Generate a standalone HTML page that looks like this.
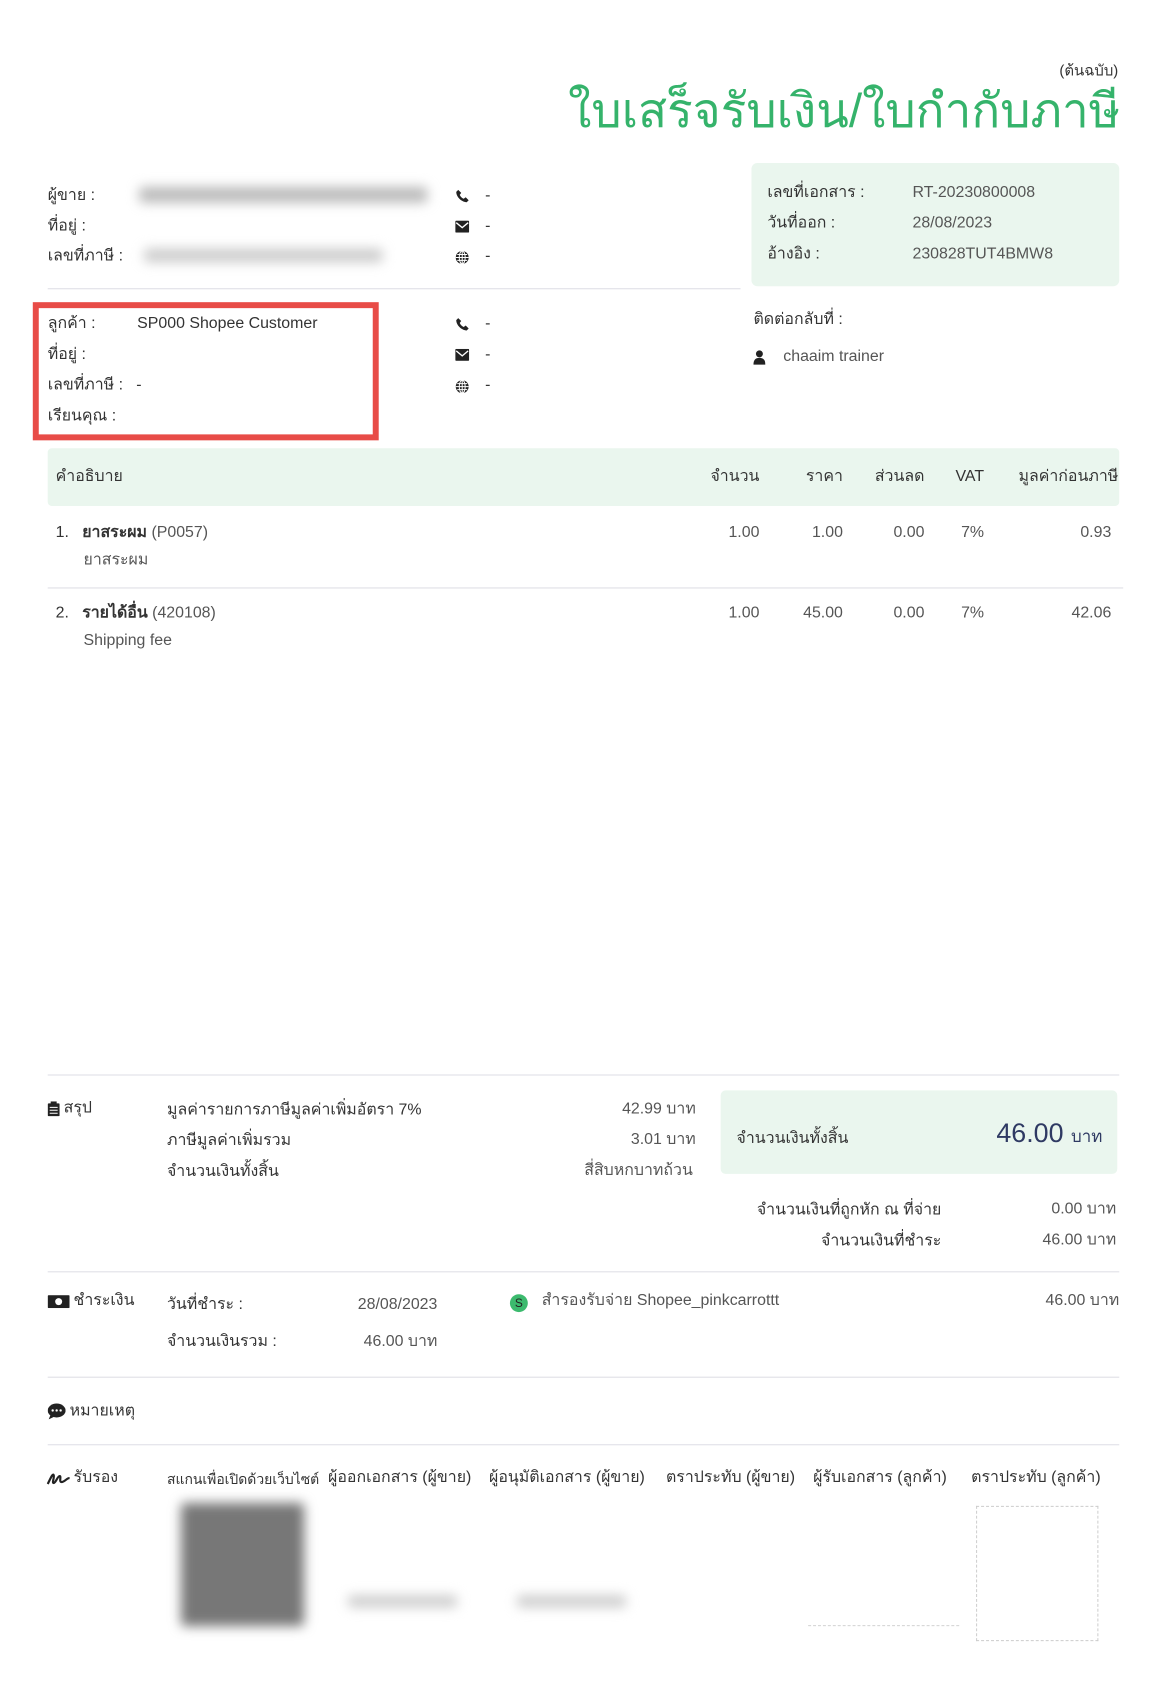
<!DOCTYPE html>
<html><head><meta charset="utf-8"><style>
*{margin:0;padding:0;box-sizing:border-box}
body{width:1171px;height:1690px;background:#fff;font-family:"Liberation Sans","Noto Sans CJK SC",sans-serif;color:#333;font-size:16px;position:relative;overflow:hidden}
#w{position:absolute;left:0;top:0;width:1171px;height:1700px;transform:scale(0.994);transform-origin:0 0}
.a{position:absolute;white-space:nowrap;line-height:20px}
.r{text-align:right}
.g{color:#555}
.hl{position:absolute;height:1px;background:#dcdce4}
.blur{position:absolute;filter:blur(6px);background:#ccc;border-radius:4px}
svg.i{position:absolute}
</style></head><body><div id="w">
<div class="a r" style="right:46px;top:62px;font-size:15px">(ต้นฉบับ)</div>
<div class="a r" style="right:44px;top:85px;font-size:48px;line-height:56px;color:#35b36b">ใบเสร็จรับเงิน/ใบกำกับภาษี</div>

<div class="a" style="left:48px;top:187px">ผู้ขาย :</div>
<div class="a" style="left:48px;top:218px">ที่อยู่ :</div>
<div class="a" style="left:48px;top:248px">เลขที่ภาษี :</div>
<div class="blur" style="left:140px;top:188px;width:290px;height:16px;background:#bbb"></div>
<div class="blur" style="left:145px;top:250px;width:240px;height:14px;background:#ccc"></div>

<svg class="i" style="left:458px;top:190px" width="14" height="14" viewBox="0 0 14 14"><path d="M3 1l3 3-1.5 2c1 2 2 3 4 4l2-1.5 3 3-2 2C6 13 1 8 1 3z" fill="#222"/></svg><div class="a" style="left:488px;top:187px">-</div>
<svg class="i" style="left:458px;top:222px" width="14" height="12" viewBox="0 0 14 12"><rect width="14" height="12" rx="1" fill="#222"/><path d="M1 2l6 5 6-5" stroke="#fff" stroke-width="1.4" fill="none"/></svg><div class="a" style="left:488px;top:218px">-</div>
<svg class="i" style="left:458px;top:252px" width="14" height="14" viewBox="0 0 14 14"><circle cx="7" cy="7" r="6.5" fill="#222"/><path d="M7 .5v13M.5 7h13M2 4h10M2 10h10" stroke="#fff" stroke-width="1"/><ellipse cx="7" cy="7" rx="3" ry="6.5" stroke="#fff" fill="none"/></svg><div class="a" style="left:488px;top:248px">-</div>
<div class="hl" style="left:48px;top:290px;width:697px"></div>

<div style="position:absolute;left:756px;top:164px;width:370px;height:124px;background:#eaf6ee;border-radius:6px"></div>
<div class="a" style="left:772px;top:184px">เลขที่เอกสาร :</div><div class="a g" style="left:918px;top:184px">RT-20230800008</div>
<div class="a" style="left:772px;top:215px">วันที่ออก :</div><div class="a g" style="left:918px;top:215px">28/08/2023</div>
<div class="a" style="left:772px;top:246px">อ้างอิง :</div><div class="a g" style="left:918px;top:246px">230828TUT4BMW8</div>

<div style="position:absolute;left:33px;top:304px;width:348px;height:139px;border:6px solid #e84c47"></div>
<div class="a" style="left:48px;top:316px">ลูกค้า :</div><div class="a" style="left:138px;top:316px">SP000 Shopee Customer</div>
<div class="a" style="left:48px;top:347px">ที่อยู่ :</div>
<div class="a" style="left:48px;top:378px">เลขที่ภาษี :&nbsp;&nbsp; -</div>
<div class="a" style="left:48px;top:409px">เรียนคุณ :</div>
<svg class="i" style="left:458px;top:319px" width="14" height="14" viewBox="0 0 14 14"><path d="M3 1l3 3-1.5 2c1 2 2 3 4 4l2-1.5 3 3-2 2C6 13 1 8 1 3z" fill="#222"/></svg><div class="a" style="left:488px;top:316px">-</div>
<svg class="i" style="left:458px;top:351px" width="14" height="12" viewBox="0 0 14 12"><rect width="14" height="12" rx="1" fill="#222"/><path d="M1 2l6 5 6-5" stroke="#fff" stroke-width="1.4" fill="none"/></svg><div class="a" style="left:488px;top:347px">-</div>
<svg class="i" style="left:458px;top:382px" width="14" height="14" viewBox="0 0 14 14"><circle cx="7" cy="7" r="6.5" fill="#222"/><path d="M7 .5v13M.5 7h13M2 4h10M2 10h10" stroke="#fff" stroke-width="1"/><ellipse cx="7" cy="7" rx="3" ry="6.5" stroke="#fff" fill="none"/></svg><div class="a" style="left:488px;top:378px">-</div>

<div class="a" style="left:758px;top:312px">ติดต่อกลับที่ :</div>
<svg class="i" style="left:758px;top:352px" width="12" height="15" viewBox="0 0 12 15"><circle cx="6" cy="4" r="3.5" fill="#222"/><path d="M0 15c0-5 2-7 6-7s6 2 6 7z" fill="#222"/></svg><div class="a g" style="left:788px;top:349px">chaaim trainer</div>

<div style="position:absolute;left:48px;top:451px;width:1078px;height:58px;background:#eaf6ee;border-radius:4px"></div>
<div class="a" style="left:56px;top:470px">คำอธิบาย</div>
<div class="a r" style="right:407px;top:470px">จำนวน</div>
<div class="a r" style="right:323px;top:470px">ราคา</div>
<div class="a r" style="right:241px;top:470px">ส่วนลด</div>
<div class="a r" style="right:181px;top:470px">VAT</div>
<div class="a r" style="right:46px;top:470px">มูลค่าก่อนภาษี</div>

<div class="a" style="left:56px;top:526px">1.&nbsp;&nbsp; <b>ยาสระผม</b> <span class="g">(P0057)</span></div>
<div class="a g" style="left:84px;top:554px">ยาสระผม</div>
<div class="a r g" style="right:407px;top:526px">1.00</div><div class="a r g" style="right:323px;top:526px">1.00</div><div class="a r g" style="right:241px;top:526px">0.00</div><div class="a r g" style="right:181px;top:526px">7%</div><div class="a r g" style="right:53px;top:526px">0.93</div>
<div class="hl" style="left:48px;top:591px;width:1082px"></div>
<div class="a" style="left:56px;top:607px">2.&nbsp;&nbsp; <b>รายได้อื่น</b> <span class="g">(420108)</span></div>
<div class="a g" style="left:84px;top:635px">Shipping fee</div>
<div class="a r g" style="right:407px;top:607px">1.00</div><div class="a r g" style="right:323px;top:607px">45.00</div><div class="a r g" style="right:241px;top:607px">0.00</div><div class="a r g" style="right:181px;top:607px">7%</div><div class="a r g" style="right:53px;top:607px">42.06</div>

<div class="hl" style="left:48px;top:1081px;width:1078px"></div>
<svg class="i" style="left:48px;top:1108px" width="12" height="15" viewBox="0 0 12 15"><rect y="2" width="12" height="13" rx="1" fill="#222"/><rect x="3" width="6" height="3" fill="#222"/><path d="M2 6h8M2 9h8M2 12h8" stroke="#fff"/></svg>
<div class="a" style="left:64px;top:1105px">สรุป</div>
<div class="a" style="left:168px;top:1107px">มูลค่ารายการภาษีมูลค่าเพิ่มอัตรา 7%</div>
<div class="a" style="left:168px;top:1138px">ภาษีมูลค่าเพิ่มรวม</div>
<div class="a" style="left:168px;top:1169px">จำนวนเงินทั้งสิ้น</div>
<div class="a r g" style="right:471px;top:1106px">42.99 บาท</div>
<div class="a r g" style="right:471px;top:1137px">3.01 บาท</div>
<div class="a r g" style="right:474px;top:1168px">สี่สิบหกบาทถ้วน</div>
<div style="position:absolute;left:725px;top:1097px;width:399px;height:84px;background:#eaf6ee;border-radius:5px"></div>
<div class="a" style="left:741px;top:1136px">จำนวนเงินทั้งสิ้น</div>
<div class="a r" style="right:62px;top:1124px;font-size:27px;line-height:32px;color:#2f3a63">46.00 <span style="font-size:17px">บาท</span></div>
<div class="a r" style="right:224px;top:1208px">จำนวนเงินที่ถูกหัก ณ ที่จ่าย</div>
<div class="a r g" style="right:48px;top:1207px">0.00 บาท</div>
<div class="a r" style="right:224px;top:1239px">จำนวนเงินที่ชำระ</div>
<div class="a r g" style="right:48px;top:1238px">46.00 บาท</div>

<div class="hl" style="left:48px;top:1279px;width:1078px"></div>
<svg class="i" style="left:48px;top:1303px" width="22" height="13" viewBox="0 0 22 13"><rect width="22" height="13" rx="1" fill="#222"/><circle cx="11" cy="6.5" r="3.5" fill="#fff"/></svg>
<div class="a" style="left:74px;top:1299px">ชำระเงิน</div>
<div class="a" style="left:168px;top:1303px">วันที่ชำระ :</div><div class="a r g" style="right:731px;top:1303px">28/08/2023</div>
<div class="a" style="left:168px;top:1340px">จำนวนเงินรวม :</div><div class="a r g" style="right:731px;top:1340px">46.00 บาท</div>
<div style="position:absolute;left:513px;top:1302px;width:18px;height:18px;border-radius:9px;background:#3cba6e;color:#222;font-size:12px;text-align:center;line-height:18px">S</div>
<div class="a g" style="left:545px;top:1299px">สำรองรับจ่าย Shopee_pinkcarrottt</div>
<div class="a r g" style="right:45px;top:1299px">46.00 บาท</div>

<div class="hl" style="left:48px;top:1385px;width:1078px"></div>
<svg class="i" style="left:48px;top:1412px" width="18" height="16" viewBox="0 0 18 16"><ellipse cx="9" cy="7" rx="9" ry="7" fill="#222"/><path d="M3 11l-2 5 6-3z" fill="#222"/><circle cx="5" cy="7" r="1.2" fill="#fff"/><circle cx="9" cy="7" r="1.2" fill="#fff"/><circle cx="13" cy="7" r="1.2" fill="#fff"/></svg>
<div class="a" style="left:70px;top:1410px">หมายเหตุ</div>
<div class="hl" style="left:48px;top:1453px;width:1078px"></div>
<svg class="i" style="left:47px;top:1481px" width="24" height="14" viewBox="0 0 24 14"><path d="M1 12C4 6 6 1 7 3s-2 8 0 8 4-7 6-7-1 6 2 6 5-4 8-4" stroke="#222" stroke-width="2.2" fill="none"/></svg>
<div class="a" style="left:74px;top:1477px">รับรอง</div>
<div class="a" style="left:168px;top:1478px;font-size:14px">สแกนเพื่อเปิดด้วยเว็บไซต์</div>
<div class="a" style="left:330px;top:1477px">ผู้ออกเอกสาร (ผู้ขาย)</div>
<div class="a" style="left:492px;top:1477px">ผู้อนุมัติเอกสาร (ผู้ขาย)</div>
<div class="a" style="left:670px;top:1477px">ตราประทับ (ผู้ขาย)</div>
<div class="a" style="left:818px;top:1477px">ผู้รับเอกสาร (ลูกค้า)</div>
<div class="a" style="left:977px;top:1477px">ตราประทับ (ลูกค้า)</div>
<div class="blur" style="left:182px;top:1512px;width:124px;height:124px;background:#777"></div>
<div class="blur" style="left:350px;top:1605px;width:110px;height:12px;background:#ccc"></div>
<div class="blur" style="left:520px;top:1605px;width:110px;height:12px;background:#ccc"></div>
<div style="position:absolute;left:813px;top:1635px;width:152px;border-top:1px dashed #ccc"></div>
<div style="position:absolute;left:982px;top:1515px;width:123px;height:136px;border:1px dashed #ccc"></div>
</div></body></html>
